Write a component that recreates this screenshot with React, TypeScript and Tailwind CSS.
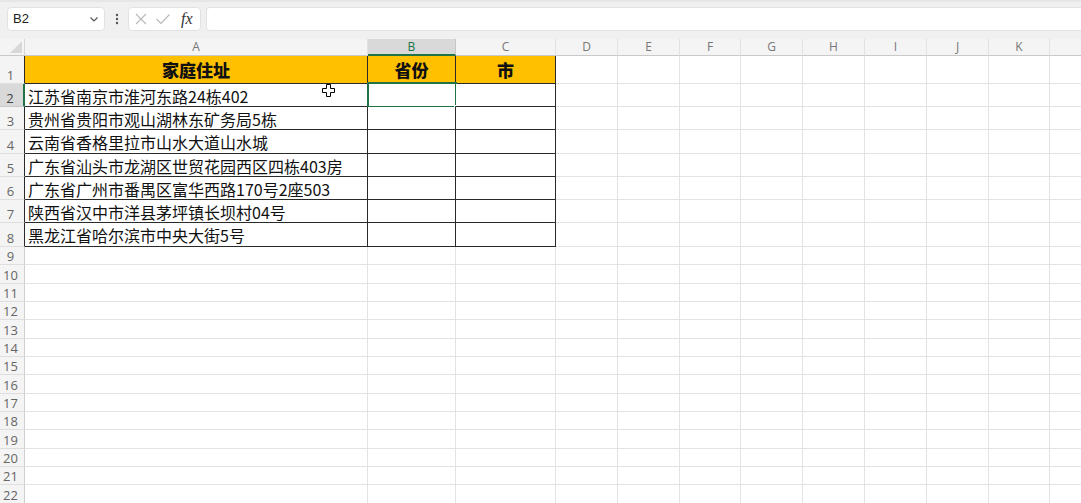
import React from "react";

const COLS = [
  { l: "A", w: "w-[343px] min-w-[343px]" },
  { l: "B", w: "w-[88px] min-w-[88px]" },
  { l: "C", w: "w-[100px] min-w-[100px]" },
  { l: "D", w: "w-[62px] min-w-[62px]" },
  { l: "E", w: "w-[62px] min-w-[62px]" },
  { l: "F", w: "w-[61px] min-w-[61px]" },
  { l: "G", w: "w-[62px] min-w-[62px]" },
  { l: "H", w: "w-[62px] min-w-[62px]" },
  { l: "I", w: "w-[62px] min-w-[62px]" },
  { l: "J", w: "w-[62px] min-w-[62px]" },
  { l: "K", w: "w-[61px] min-w-[61px]" },
  { l: "", w: "w-[60px] min-w-[60px]" },
];

const ROW_H = [
  "h-[28px]",
  "h-[23px]", "h-[23px]", "h-[24px]", "h-[23px]", "h-[23px]", "h-[23px]", "h-[24px]",
  "h-[18px]", "h-[19px]", "h-[18px]", "h-[18px]", "h-[19px]", "h-[18px]", "h-[18px]",
  "h-[19px]", "h-[18px]", "h-[18px]", "h-[19px]", "h-[18px]", "h-[18px]", "h-[19px]",
];

const ADDR = [
  "江苏省南京市淮河东路24栋402",
  "贵州省贵阳市观山湖林东矿务局5栋",
  "云南省香格里拉市山水大道山水城",
  "广东省汕头市龙湖区世贸花园西区四栋403房",
  "广东省广州市番禺区富华西路170号2座503",
  "陕西省汉中市洋县茅坪镇长坝村04号",
  "黑龙江省哈尔滨市中央大街5号",
];

const HEAD = ["家庭住址", "省份", "市"];

const font = "font-['Noto_Sans_CJK_SC','Noto_Sans',sans-serif]";

function Cell({ r, c }: { r: number; c: number }) {
  const inTable = r <= 8 && c <= 2;
  const isHeader = r === 1 && c <= 2;
  const sel = r === 2 && c === 1;
  const cls = [
    COLS[c].w,
    "relative flex items-center border-r border-b overflow-visible whitespace-nowrap",
    inTable ? "border-r-[#2a2a2a] border-b-[#2a2a2a]" : "border-r-[#e3e3e3] border-b-[#e3e3e3]",
    isHeader ? "bg-[#ffc000] justify-center" : "bg-white",
  ].join(" ");
  return (
    <div className={cls}>
      {isHeader && (
        <span className={`${font} text-[17px] font-black text-[#111] leading-none`}>{HEAD[c]}</span>
      )}
      {inTable && !isHeader && c === 0 && (
        <span className={`${font} text-[16px] text-[#111] leading-none pl-[3px] pt-[1px]`}>{ADDR[r - 2]}</span>
      )}
      {sel && (
        <>
          <div className="absolute left-[-1px] top-[-2px] right-[-2px] bottom-[-2px] border-2 border-[#217346] pointer-events-none" />
          <div className="absolute right-[-4px] bottom-[-4px] w-[5px] h-[5px] bg-[#217346] border border-white" />
        </>
      )}
    </div>
  );
}

export default function App() {
  const rows = Array.from({ length: 22 }, (_, i) => i + 1);
  return (
    <div className="w-[1081px] h-[503px] overflow-hidden bg-white relative select-none">
      {/* toolbar */}
      <div className="h-[39px] bg-[#f0f0f0] border-t-2 border-t-[#e6e6e6] flex items-start pt-[5px]">
        <div className="ml-[7px] w-[98px] h-[24px] bg-white rounded-[4px] border border-[#e2e2e2] flex items-center justify-between pl-[5px] pr-[4px]">
          <span className="font-['Liberation_Sans',sans-serif] text-[13px] text-[#222]">B2</span>
          <svg width="12" height="12" viewBox="0 0 12 12">
            <path d="M2.5 4.5 L6 8 L9.5 4.5" fill="none" stroke="#555" strokeWidth="1.2" />
          </svg>
        </div>
        <div className="w-[23px] h-[24px] flex items-center justify-center">
          <svg width="4" height="12" viewBox="0 0 4 12">
            <circle cx="2" cy="2" r="1.2" fill="#555" />
            <circle cx="2" cy="6" r="1.2" fill="#555" />
            <circle cx="2" cy="10" r="1.2" fill="#555" />
          </svg>
        </div>
        <div className="w-[73px] h-[24px] bg-white rounded-[4px] border border-[#e2e2e2] flex items-center pl-[5px] gap-[7px]">
          <svg width="14" height="14" viewBox="0 0 14 14">
            <path d="M2 2 L12 12 M12 2 L2 12" stroke="#b8b8b8" strokeWidth="1.1" fill="none" />
          </svg>
          <svg width="16" height="14" viewBox="0 0 16 14">
            <path d="M1.5 7 L6 11.5 L14.5 2.5" stroke="#b8b8b8" strokeWidth="1.1" fill="none" />
          </svg>
          <span className="font-['Liberation_Serif',serif] italic text-[16px] text-[#333] leading-none ml-[3px]">fx</span>
        </div>
        <div className="ml-[5px] flex-1 h-[24px] bg-white rounded-l-[4px] border border-[#e2e2e2] border-r-0" />
      </div>

      {/* column headers */}
      <div className="flex h-[17px] bg-[#f4f4f4]">
        <div className="w-[25px] min-w-[25px] relative border-r border-r-[#d6d6d6] border-b border-b-[#c9c9c9]">
          <svg className="absolute right-[2px] bottom-[2px]" width="12" height="12" viewBox="0 0 12 12">
            <path d="M12 0 L12 12 L0 12 Z" fill="#d8d8d8" />
          </svg>
        </div>
        {COLS.map((col, i) => {
          const sel = i === 1;
          return (
            <div
              key={i}
              className={[
                col.w,
                "flex items-center justify-center border-r font-['Open_Sans','Liberation_Sans',sans-serif] text-[12px] leading-none",
                sel
                  ? "bg-[#d9d9d9] border-b-2 border-b-[#217346] text-[#217346] border-r-[#c6c6c6]"
                  : "border-b border-b-[#c9c9c9] text-[#777] border-r-[#e2e2e2]",
              ].join(" ")}
            >
              {col.l}
            </div>
          );
        })}
      </div>

      {/* rows */}
      {rows.map((r) => {
        const selRow = r === 2;
        return (
          <div key={r} className={`flex ${ROW_H[r - 1]}`}>
            <div
              className={[
                "w-[25px] min-w-[25px] flex items-end justify-center pr-[3px] pb-[1px] border-b font-['Open_Sans','Liberation_Sans',sans-serif] text-[13px] leading-none",
                selRow
                  ? "bg-[#d9d9d9] border-r-2 border-r-[#217346] text-[#444] border-b-[#c9c9c9]"
                  : r <= 8
                  ? "bg-[#f4f4f4] border-r border-r-[#2a2a2a] text-[#666] border-b-[#dedede]"
                  : "bg-[#f4f4f4] border-r border-r-[#cfcfcf] text-[#666] border-b-[#dedede]",
              ].join(" ")}
            >
              {r}
            </div>
            {COLS.map((_, c) => (
              <Cell key={c} r={r} c={c} />
            ))}
          </div>
        );
      })}

      {/* mouse cursor */}
      <svg className="absolute left-[322px] top-[84px]" width="13" height="13" viewBox="0 0 13 13">
        <path
          d="M4.5 0.5 H8.5 V4.5 H12.5 V8.5 H8.5 V12.5 H4.5 V8.5 H0.5 V4.5 H4.5 Z"
          fill="white"
          stroke="black"
          strokeWidth="1"
        />
      </svg>
    </div>
  );
}
